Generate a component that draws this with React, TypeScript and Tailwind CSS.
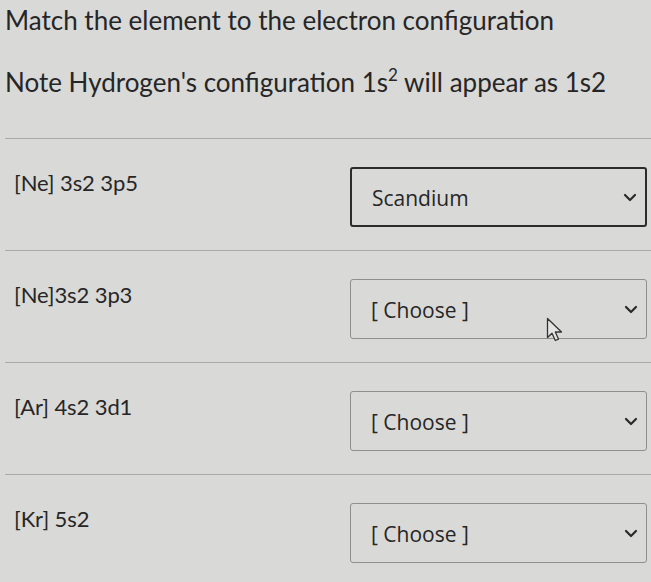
import React from 'react';

type Row = { config: string; answer: string; focused?: boolean };

const rows: Row[] = [
  { config: '[Ne] 3s2 3p5', answer: 'Scandium', focused: true },
  { config: '[Ne]3s2 3p3', answer: '[ Choose ]' },
  { config: '[Ar] 4s2 3d1', answer: '[ Choose ]' },
  { config: '[Kr] 5s2', answer: '[ Choose ]' }
];

const Chevron = () => (
  <svg width="14" height="9" viewBox="0 0 14 9" fill="none">
    <path d="M2 2l5 5 5-5" stroke="#2a2a2a" strokeWidth="2.2" strokeLinecap="round" strokeLinejoin="round" />
  </svg>
);

const Cursor = () => (
  <svg className="absolute left-[546px] top-[317px]" width="20" height="26" viewBox="0 0 20 26" fill="none">
    <path d="M1.5 1.5v19l4.5-4.3 3.3 7.3 3.2-1.4-3.2-7.1h6.2z" fill="#e4e4e4" stroke="#333" strokeWidth="1.3" strokeLinejoin="round" />
  </svg>
);

const App = () => {
  return (
    <div className="relative w-[651px] h-[582px] overflow-hidden bg-[#d9d9d8] text-[#262626] pl-[5px]" style={{ fontFamily: 'Lato, "Noto Sans", sans-serif' }}>
      <div className="pt-[5px] text-[26px] leading-[31px]">Match the element to the electron configuration</div>
      <div className="mt-[31px] text-[26px] leading-[31px]">
        Note Hydrogen's configuration 1s<sup className="text-[17px] relative -top-[11px]">2</sup> will appear as 1s2
      </div>

      <div className="mt-[40px]">
        {rows.map((r, i) => (
          <div key={i} className="flex h-[112px] border-t border-[#a9a9a8] pt-[28px]">
            <div className="w-[345px] pl-[9px] pt-[2px] text-[22px] leading-[28px] tracking-[-0.1px]">{r.config}</div>
            <div
              className={
                'flex items-center justify-between w-[297px] h-[60px] rounded-[3px] pl-[20px] pr-[8px] ' +
                (r.focused ? 'border-2 border-[#2c2c2c]' : 'border border-[#8f8f8f]')
              }
            >
              <span className="pt-[4px] text-[21px]" style={{ fontFamily: '"Open Sans", sans-serif' }}>
                {r.answer}
              </span>
              <Chevron />
            </div>
          </div>
        ))}
      </div>
      <Cursor />
    </div>
  );
};

export default App;
